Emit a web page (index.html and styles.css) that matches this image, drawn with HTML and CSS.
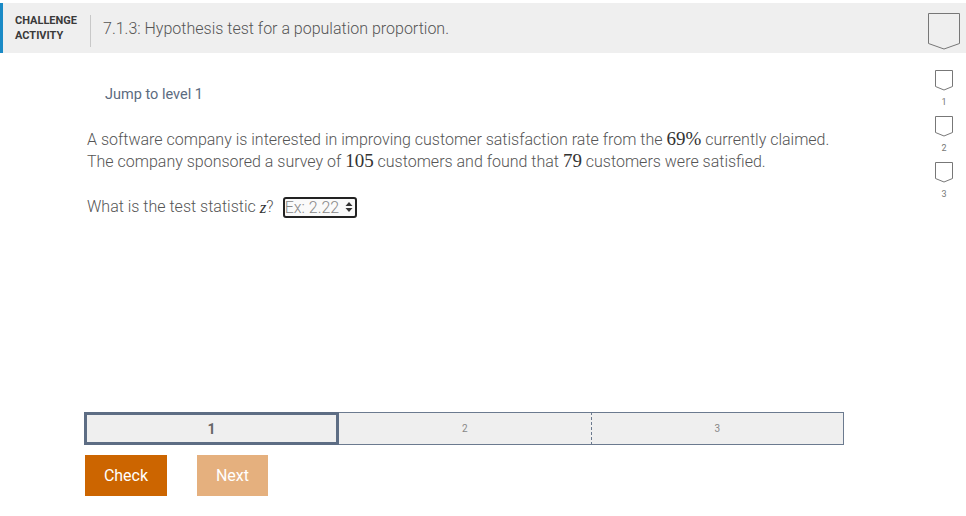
FILE: index.html
```html
<!DOCTYPE html>
<html>
<head>
<meta charset="utf-8">
<link rel="stylesheet" href="styles.css">
</head>
<body>
<header class="header">
  <div class="accent"></div>
  <div class="label">CHALLENGE<br>ACTIVITY</div>
  <div class="sep"></div>
  <div class="title">7.1.3: Hypothesis test for a population proportion.</div>
  <svg class="big-badge" width="34" height="38" viewBox="0 0 34 38">
    <path d="M1.5 1.5 H32.5 V31.5 L17 37 L1.5 31.5 Z" fill="none" stroke="#777" stroke-width="1"/>
  </svg>
</header>
<div class="body">
  <main class="main">
    <div class="jump">Jump to level 1</div>
    <p class="para">A software company is interested in improving customer satisfaction rate from the <span class="m">69%</span> currently claimed.<br>The company sponsored a survey of <span class="m">105</span> customers and found that <span class="m">79</span> customers were satisfied.</p>
    <div class="question">What is the test statistic <span class="mi">z</span>? <span class="input"><span class="ph">Ex: 2.22</span><span class="spin"><svg width="8" height="12" viewBox="0 0 8 12"><path d="M0.5 5 L4 1 L7.5 5 Z M0.5 7 L4 11 L7.5 7 Z" fill="#333"/></svg></span></span></div>
    <div class="progress">
      <div class="seg seg1">1</div>
      <div class="seg seg2">2</div>
      <div class="seg seg3">3</div>
    </div>
    <div class="buttons">
      <button class="btn check">Check</button>
      <button class="btn next">Next</button>
    </div>
  </main>
  <aside class="levels">
    <div class="lvl"><svg width="18" height="21" viewBox="0 0 18 21"><path d="M0.5 0.5 H17.5 V16.5 L9 20 L0.5 16.5 Z" fill="none" stroke="#777" stroke-width="1"/></svg><span>1</span></div>
    <div class="lvl"><svg width="18" height="21" viewBox="0 0 18 21"><path d="M0.5 0.5 H17.5 V16.5 L9 20 L0.5 16.5 Z" fill="none" stroke="#777" stroke-width="1"/></svg><span>2</span></div>
    <div class="lvl"><svg width="18" height="21" viewBox="0 0 18 21"><path d="M0.5 0.5 H17.5 V16.5 L9 20 L0.5 16.5 Z" fill="none" stroke="#777" stroke-width="1"/></svg><span>3</span></div>
  </aside>
</div>
</body>
</html>
```
FILE: styles.css
```css
html, body {
  margin: 0;
  padding: 0;
  background: #fff;
}
body {
  font-family: Roboto, "Liberation Sans", sans-serif;
  color: #555;
}
.header {
  margin-top: 3px;
  height: 50px;
  background: #efefef;
  display: flex;
  align-items: center;
}
.accent {
  width: 3px;
  align-self: stretch;
  background: #1a8ac6;
}
.label {
  margin-left: 12px;
  font-size: 11px;
  font-weight: 700;
  line-height: 15px;
  color: #3a3a3a;
  width: 75px;
}
.sep {
  width: 1px;
  height: 32px;
  background: #c8c8c8;
  margin-top: 6px;
}
.title {
  margin-left: 12px;
  font-size: 16px;
  font-weight: 300;
  color: #555;
  flex: 1;
  margin-top: 1px;
}
.big-badge {
  margin-right: 5px;
  margin-top: 5px;
}
.body {
  display: flex;
}
.main {
  flex: 1;
  padding-left: 84px;
}
.jump {
  margin-top: 32px;
  margin-left: 21px;
  line-height: 20px;
  font-size: 14.5px;
  font-weight: 400;
  color: #5b6b80;
}
.para {
  margin: 24px 0 0 3px;
  font-size: 16px;
  font-weight: 300;
  line-height: 22px;
  color: #555;
}
.m {
  font-family: "Liberation Serif", serif;
  font-size: 19px;
  line-height: 1;
  color: #333;
}
.mi {
  font-family: "Liberation Serif", serif;
  font-style: italic;
  font-size: 17px;
  line-height: 1;
  color: #333;
}
.question {
  margin: 23px 0 0 3px;
  font-size: 16px;
  font-weight: 300;
  line-height: 22px;
  height: 22px;
  display: flex;
  align-items: center;
}
.question .mi {
  margin-left: 4px;
}
.input {
  margin-left: 9px;
  display: inline-flex;
  align-items: center;
  width: 74px;
  height: 21px;
  box-sizing: border-box;
  border: 2px solid #222;
  border-radius: 3px;
  padding-left: 0;
  background: #fafafa;
}
.ph {
  font-size: 16px;
  color: #888;
  font-weight: 300;
  flex: 1;
  line-height: 17px;
  white-space: nowrap;
}
.spin {
  display: flex;
  margin-right: 2px;
}
.progress {
  margin-top: 194px;
  width: 760px;
  height: 33px;
  display: flex;
}
.seg {
  flex: 1;
  box-sizing: border-box;
  background: #efefef;
  display: flex;
  align-items: center;
  justify-content: center;
  font-size: 10px;
  color: #888;
}
.seg1 {
  flex: 0 0 255px;
  border: 3px solid #5d6d84;
  font-size: 14px;
  font-weight: 700;
  color: #666;
}
.seg2 {
  border-top: 1px solid #6b7a8f;
  border-bottom: 1px solid #6b7a8f;
  border-right: 1px dashed #6b7a8f;
}
.seg3 {
  border-top: 1px solid #6b7a8f;
  border-bottom: 1px solid #6b7a8f;
  border-right: 1px solid #6b7a8f;
}
.buttons {
  margin-top: 10px;
  margin-left: 1px;
  display: flex;
  gap: 30px;
}
.btn {
  height: 41px;
  border: none;
  color: #fff;
  font-family: Roboto, "Liberation Sans", sans-serif;
  font-size: 16px;
  padding: 0;
}
.check {
  width: 82px;
  background: #cc6500;
}
.next {
  width: 71px;
  background: #e5b07e;
}
.levels {
  width: 46px;
  display: flex;
  flex-direction: column;
  align-items: center;
  padding-top: 17px;
  box-sizing: border-box;
  gap: 5px;
}
.lvl {
  display: flex;
  flex-direction: column;
  align-items: center;
  height: 41px;
  margin-left: 2px;
}
.lvl span {
  font-size: 9px;
  color: #777;
  line-height: 11px;
  margin-top: 6px;
}
```
